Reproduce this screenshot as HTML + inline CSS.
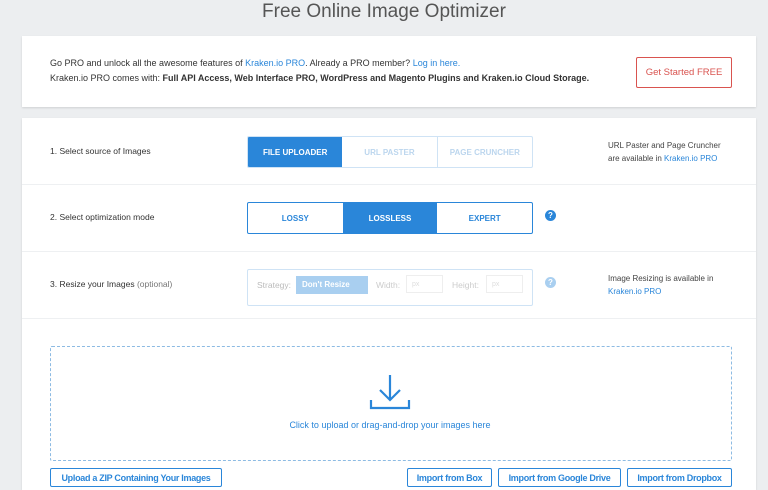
<!DOCTYPE html>
<html><head><style>
*{box-sizing:border-box;margin:0;padding:0}
html,body{width:768px;height:490px;overflow:hidden}
body{background:#eceef0;font-family:"Liberation Sans",sans-serif;position:relative;color:#333}
.a{position:absolute}
.t{font-size:9px;white-space:nowrap}
.b{color:#2a86d9}
.card{background:#fff;box-shadow:0 1px 2px rgba(0,0,0,.12)}
.seg{display:flex;border:1px solid #2a86d9;border-radius:2px;overflow:hidden}
.seg div{flex:1;text-align:center;font-size:8px;font-weight:bold;color:#2a86d9;display:flex;align-items:center;justify-content:center}
.seg .on{background:#2a86d9;color:#fff}
.btn{border:1px solid #2a86d9;color:#2a86d9;font-size:9px;font-weight:bold;letter-spacing:-0.3px;display:flex;align-items:center;justify-content:center;height:19px;top:468px;background:#fff;border-radius:2px}
.line{left:22px;width:734px;height:1px;background:#eef0f2}
.q{width:11px;height:11px;border-radius:50%;background:#2a86d9;color:#fff;font-size:8px;font-weight:bold;text-align:center;line-height:11px}
</style></head><body>
<div class="a" style="left:0;width:768px;text-align:center;font-size:19px;color:#555;top:1px">Free Online Image Optimizer</div>
<div class="a card" style="left:22px;top:36px;width:734px;height:71px"></div>
<div class="a t" style="left:50px;top:58px">Go PRO and unlock all the awesome features of <span class="b">Kraken.io PRO</span>. Already a PRO member? <span class="b">Log in here.</span></div>
<div class="a t" style="left:50px;top:73px">Kraken.io PRO comes with: <b>Full API Access, Web Interface PRO, WordPress and Magento Plugins and Kraken.io Cloud Storage.</b></div>
<div class="a" style="left:636px;top:57px;width:96px;height:31px;border:1px solid #d9534f;color:#d9534f;font-size:9.5px;display:flex;align-items:center;justify-content:center;border-radius:2px">Get Started FREE</div>
<div class="a card" style="left:22px;top:118px;width:734px;height:372px"></div>
<div class="a line" style="top:184px"></div>
<div class="a line" style="top:251px"></div>
<div class="a line" style="top:318px"></div>
<div class="a t" style="left:50px;top:146px;font-size:8.5px">1. Select source of Images</div>
<div class="a seg" style="left:247px;top:136px;width:286px;height:32px;border-color:#cfe3f5"><div class="on">FILE UPLOADER</div><div style="color:#bcd6ee;border-right:1px solid #cfe3f5">URL PASTER</div><div style="color:#bcd6ee">PAGE CRUNCHER</div></div>
<div class="a t" style="left:608px;top:139px;font-size:8px;line-height:13px;color:#444">URL Paster and Page Cruncher<br>are available in <span class="b">Kraken.io PRO</span></div>
<div class="a t" style="left:50px;top:212px;font-size:8.5px">2. Select optimization mode</div>
<div class="a seg" style="left:247px;top:202px;width:286px;height:32px"><div>LOSSY</div><div class="on">LOSSLESS</div><div>EXPERT</div></div>
<div class="a q" style="left:545px;top:210px">?</div>
<div class="a t" style="left:50px;top:279px;font-size:8.5px">3. Resize your Images <span style="color:#777">(optional)</span></div>
<div class="a" style="left:247px;top:269px;width:286px;height:37px;border:1px solid #cfe3f5;border-radius:2px"></div>
<div class="a t" style="left:257px;top:280px;color:#bbb;font-size:8.5px">Strategy:</div>
<div class="a" style="left:296px;top:276px;width:72px;height:18px;background:#a9cff0;color:#fff;font-size:8px;font-weight:bold;padding:4px 6px">Don't Resize</div>
<div class="a t" style="left:376px;top:280px;color:#ccc;font-size:8.5px">Width:</div>
<div class="a" style="left:406px;top:275px;width:37px;height:18px;border:1px solid #eee;color:#ddd;font-size:7px;padding:5px">px</div>
<div class="a t" style="left:452px;top:280px;color:#ccc;font-size:8.5px">Height:</div>
<div class="a" style="left:486px;top:275px;width:37px;height:18px;border:1px solid #eee;color:#ddd;font-size:7px;padding:5px">px</div>
<div class="a q" style="left:545px;top:277px;background:#a9cff0">?</div>
<div class="a t" style="left:608px;top:272px;font-size:8px;line-height:13px;color:#444">Image Resizing is available in<br><span class="b">Kraken.io PRO</span></div>
<div class="a" style="left:50px;top:346px;width:682px;height:115px;border:1px dashed #8dbbe3;border-radius:2px"></div>
<svg class="a" style="left:369px;top:373px" width="42" height="38" viewBox="0 0 42 38"><g fill="none" stroke="#2a86d9" stroke-width="2.2"><path d="M21 2V27M11 17L21 27L31 17"/><path d="M2 27V35H40V27"/></g></svg>
<div class="a t" style="left:0;width:780px;text-align:center;top:420px;color:#2a86d9;font-size:9px">Click to upload or drag-and-drop your images here</div>
<div class="a btn" style="left:50px;width:172px">Upload a ZIP Containing Your Images</div>
<div class="a btn" style="left:407px;width:85px">Import from Box</div>
<div class="a btn" style="left:498px;width:123px">Import from Google Drive</div>
<div class="a btn" style="left:627px;width:105px">Import from Dropbox</div>
</body></html>
